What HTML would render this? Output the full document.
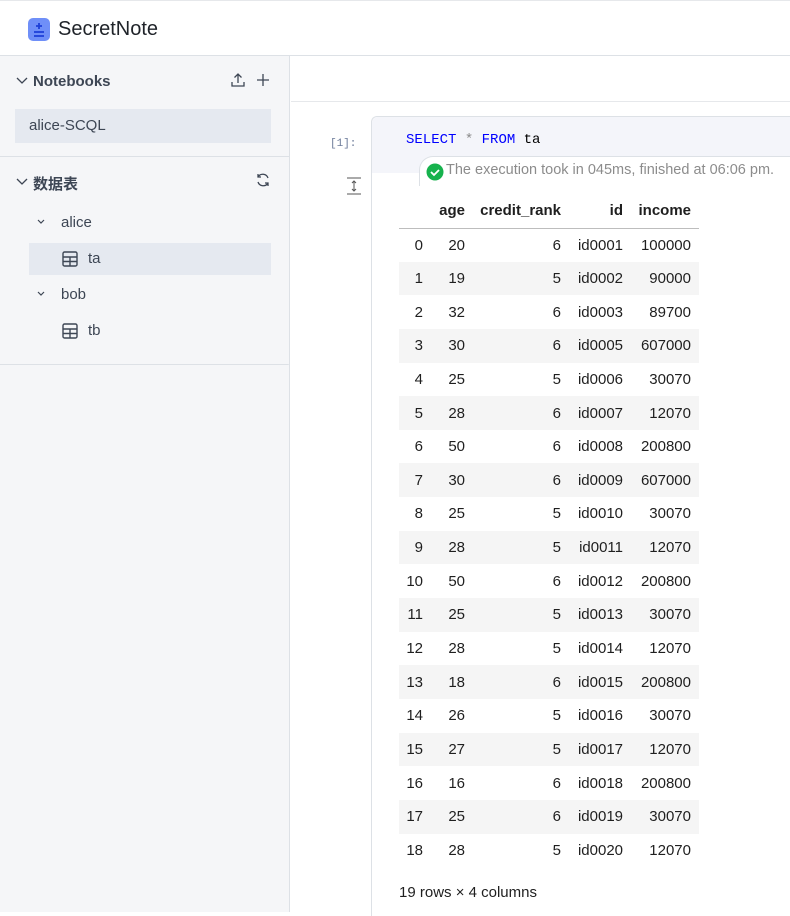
<!DOCTYPE html>
<html><head><meta charset="utf-8"><style>
*{box-sizing:border-box;margin:0;padding:0}
body{width:790px;height:912px;overflow:hidden;background:#fff;font-family:"Liberation Sans","Noto Sans CJK SC",sans-serif;position:relative}
.hdr{position:absolute;left:0;top:0;width:790px;height:56px;border-bottom:1px solid #dde1e6;border-top:1px solid #e6e8eb;background:#fff}
.logo{position:absolute;left:28px;top:17px;width:22px;height:23px;border-radius:5px;background:#6f8ff8}
.title{position:absolute;left:58px;top:17px;font-size:20px;color:#1f2329}
.side{position:absolute;left:0;top:56px;width:290px;height:856px;background:#f5f6f8;border-right:1px solid #dde1e6}
.sec{position:absolute;font-size:15px;font-weight:bold;color:#3d4654}
.item{position:absolute;font-size:15px;color:#3d4654}
.main{position:absolute;left:291px;top:56px;width:499px;height:856px;background:#fff}
table{position:absolute;left:399px;top:193px;border-collapse:collapse;font-size:15px;color:#1f1f1f}
td,th{height:33.65px;padding:0 8px 0 0;text-align:right}
th{font-weight:bold;height:35px;border-bottom:1px solid #bdbdbd}
tr:nth-child(odd) td{background:#f5f5f5}
</style></head><body>
<div class="hdr"><div class="logo"><svg width="22" height="23" viewBox="0 0 22 23"><path d="M11 5v6M8 8h6M6 14h10M6 18h10" stroke="#1c3fd8" stroke-width="1.8" fill="none"/></svg></div><div class="title">SecretNote</div></div>
<div class="side">
<svg style="position:absolute;left:16px;top:20px" width="12" height="10"><path d="M1 2l5 5 5-5" stroke="#3d4654" stroke-width="1.3" fill="none"/></svg>
<div class="sec" style="left:33px;top:17px">Notebooks</div>
<svg style="position:absolute;left:230px;top:16px" width="16" height="16"><path d="M8 11V2M4.5 5.5L8 2l3.5 3.5M2 10v4h12v-4" stroke="#3d4654" stroke-width="1.3" fill="none"/></svg>
<svg style="position:absolute;left:256px;top:17px" width="14" height="14"><path d="M7 1v12M1 7h12" stroke="#3d4654" stroke-width="1.3"/></svg>
<div style="position:absolute;left:15px;top:53px;width:256px;height:34px;background:#e5e9f0"></div>
<div class="item" style="left:29px;top:61px">alice-SCQL</div>
<div style="position:absolute;left:0;top:100px;width:290px;border-top:1px solid #dde1e6"></div>
<svg style="position:absolute;left:16px;top:121px" width="12" height="10"><path d="M1 2l5 5 5-5" stroke="#3d4654" stroke-width="1.3" fill="none"/></svg>
<div class="sec" style="left:33px;top:117px">数据表</div>
<svg style="position:absolute;left:255px;top:116px" width="16" height="16"><path d="M13 6A5.5 5.5 0 0 0 3 5M3 10a5.5 5.5 0 0 0 10 1M3 2v3h3M13 14v-3h-3" stroke="#3d4654" stroke-width="1.3" fill="none"/></svg>
<svg style="position:absolute;left:37px;top:163px" width="8" height="6"><path d="M1 1l3 3 3-3" stroke="#3d4654" stroke-width="1.2" fill="none"/></svg>
<div class="item" style="left:61px;top:158px">alice</div>
<div style="position:absolute;left:29px;top:187px;width:242px;height:32px;background:#e5e9f0"></div>
<svg style="position:absolute;left:62px;top:195px" width="16" height="16"><rect x="1" y="1" width="14" height="14" rx="1.5" stroke="#3d4654" stroke-width="1.4" fill="none"/><path d="M1 6h14M1 10.5h14M8 6v9" stroke="#3d4654" stroke-width="1.4"/></svg>
<div class="item" style="left:88px;top:194px">ta</div>
<svg style="position:absolute;left:37px;top:235px" width="8" height="6"><path d="M1 1l3 3 3-3" stroke="#3d4654" stroke-width="1.2" fill="none"/></svg>
<div class="item" style="left:61px;top:230px">bob</div>
<svg style="position:absolute;left:62px;top:267px" width="16" height="16"><rect x="1" y="1" width="14" height="14" rx="1.5" stroke="#3d4654" stroke-width="1.4" fill="none"/><path d="M1 6h14M1 10.5h14M8 6v9" stroke="#3d4654" stroke-width="1.4"/></svg>
<div class="item" style="left:88px;top:266px">tb</div>
<div style="position:absolute;left:0;top:308px;width:289px;border-top:1px solid #dde1e6;border-radius:0 0 8px 0"></div>
</div>
<div class="main">
<div style="position:absolute;left:0;top:45px;width:499px;border-top:1px solid #e6e8eb"></div>
<div style="position:absolute;left:80px;top:60px;width:430px;height:800px;border-left:1px solid #dde1e6;border-top:1px solid #dde1e6;border-radius:6px 0 0 0"></div>
<div style="position:absolute;left:81px;top:61px;width:420px;height:56px;background:#f4f5fa;border-radius:6px 0 0 0"></div>
<div style="position:absolute;left:128px;top:100px;width:380px;height:30px;background:#fff;border-top:1px solid #dde1e6;border-left:1px solid #dde1e6;border-radius:14px 0 0 0"></div>
</div>
<div style="position:absolute;left:330px;top:138px;font:11px 'Liberation Mono',monospace;color:#6b7a99">[1]:</div>
<svg style="position:absolute;left:346px;top:177px" width="16" height="18"><path d="M1 1h14M1 17h14M8 4v10M6 6l2-2 2 2M6 12l2 2 2-2" stroke="#555" stroke-width="1" fill="none"/></svg>
<div style="position:absolute;left:406px;top:132px;font:14px 'Liberation Mono',monospace;white-space:pre"><span style="color:#0000ff">SELECT</span> <span style="color:#888">*</span> <span style="color:#0000ff">FROM</span> <span style="color:#000">ta</span></div>
<svg style="position:absolute;left:426px;top:163px" width="18" height="18"><circle cx="9" cy="9" r="8.5" fill="#16b24d"/><path d="M5 9l3 3 5-5" stroke="#fff" stroke-width="1.8" fill="none"/></svg>
<div style="position:absolute;left:446px;top:162px;font-size:14.5px;color:#8c8c8c">The execution took in 045ms, finished at 06:06 pm.</div>
<table>
<tr><th style="width:32px"></th><th style="width:42px">age</th><th style="width:96px">credit_rank</th><th style="width:62px">id</th><th style="width:68px">income</th></tr>
<tr><td>0</td><td>20</td><td>6</td><td>id0001</td><td>100000</td></tr>
<tr><td>1</td><td>19</td><td>5</td><td>id0002</td><td>90000</td></tr>
<tr><td>2</td><td>32</td><td>6</td><td>id0003</td><td>89700</td></tr>
<tr><td>3</td><td>30</td><td>6</td><td>id0005</td><td>607000</td></tr>
<tr><td>4</td><td>25</td><td>5</td><td>id0006</td><td>30070</td></tr>
<tr><td>5</td><td>28</td><td>6</td><td>id0007</td><td>12070</td></tr>
<tr><td>6</td><td>50</td><td>6</td><td>id0008</td><td>200800</td></tr>
<tr><td>7</td><td>30</td><td>6</td><td>id0009</td><td>607000</td></tr>
<tr><td>8</td><td>25</td><td>5</td><td>id0010</td><td>30070</td></tr>
<tr><td>9</td><td>28</td><td>5</td><td>id0011</td><td>12070</td></tr>
<tr><td>10</td><td>50</td><td>6</td><td>id0012</td><td>200800</td></tr>
<tr><td>11</td><td>25</td><td>5</td><td>id0013</td><td>30070</td></tr>
<tr><td>12</td><td>28</td><td>5</td><td>id0014</td><td>12070</td></tr>
<tr><td>13</td><td>18</td><td>6</td><td>id0015</td><td>200800</td></tr>
<tr><td>14</td><td>26</td><td>5</td><td>id0016</td><td>30070</td></tr>
<tr><td>15</td><td>27</td><td>5</td><td>id0017</td><td>12070</td></tr>
<tr><td>16</td><td>16</td><td>6</td><td>id0018</td><td>200800</td></tr>
<tr><td>17</td><td>25</td><td>6</td><td>id0019</td><td>30070</td></tr>
<tr><td>18</td><td>28</td><td>5</td><td>id0020</td><td>12070</td></tr>
</table>
<div style="position:absolute;left:399px;top:884px;font-size:15px;color:#1f1f1f">19 rows × 4 columns</div>
</body></html>
